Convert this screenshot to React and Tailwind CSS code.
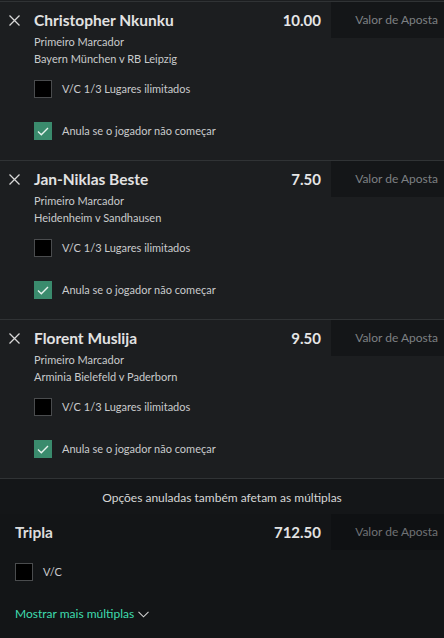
import React from "react";

const font = { fontFamily: 'Lato, "Open Sans", "Liberation Sans", sans-serif' };

function XIcon() {
  return (
    <svg width="11" height="11" viewBox="0 0 11 11" className="text-[#d8d8d8]">
      <path d="M0.5 0.5 L10.5 10.5 M10.5 0.5 L0.5 10.5" stroke="currentColor" strokeWidth="1.3" fill="none" />
    </svg>
  );
}

function Box({ checked }) {
  if (checked) {
    return (
      <div className="w-[18px] h-[18px] bg-[#3a8b6d] flex items-center justify-center">
        <svg width="12" height="9" viewBox="0 0 12 9">
          <path d="M1 4.5 L4.3 7.7 L11 1" stroke="#e8f3ee" strokeWidth="1.4" fill="none" />
        </svg>
      </div>
    );
  }
  return <div className="w-[18px] h-[18px] bg-black border border-[#4a4c4e]" />;
}

function Stake({ dark }) {
  return (
    <div
      className={
        dark
          ? "w-[113px] h-[36px] bg-[#0f1113] flex items-center justify-end pr-[6px] text-[12px] text-[#6f7275]"
          : "w-[113px] h-[36px] bg-[#141618] flex items-center justify-end pr-[6px] text-[12px] text-[#7d8083]"
      }
    >
      Valor de Aposta
    </div>
  );
}

function Selection({ name, odds, match }) {
  return (
    <div className="h-[158px] bg-[#1c1e20] border-t border-[#303335] box-content">
      <div className="flex items-center h-[36px]">
        <div className="w-[34px] flex justify-center pr-[6px]">
          <XIcon />
        </div>
        <div className="flex-1 text-[15.5px] font-bold text-[#e2e2e2] leading-none pt-[1px]">{name}</div>
        <div className="text-[15px] font-bold text-[#e6e6e6] pr-[10px] leading-none pt-[1px]">{odds}</div>
        <Stake />
      </div>
      <div className="pl-[34px] text-[11px] text-[#c9cbcc] leading-[17px] mt-[-5px]">Primeiro Marcador</div>
      <div className="pl-[34px] text-[11px] text-[#c9cbcc] leading-[17px]">{match}</div>
      <div className="pl-[34px] flex items-center gap-[10px] mt-[13px] text-[11px] text-[#c9cbcc]">
        <Box />
        <span>V/C 1/3 Lugares ilimitados</span>
      </div>
      <div className="pl-[34px] flex items-center gap-[10px] mt-[24px] text-[11px] text-[#c9cbcc]">
        <Box checked />
        <span>Anula se o jogador não começar</span>
      </div>
    </div>
  );
}

export default function App() {
  return (
    <div style={font} className="w-[444px] h-[638px] bg-[#131517] overflow-hidden">
      <div className="h-[1px] bg-[#1c1e20]" />
      <Selection name="Christopher Nkunku" odds="10.00" match="Bayern München v RB Leipzig" />
      <Selection name="Jan-Niklas Beste" odds="7.50" match="Heidenheim v Sandhausen" />
      <Selection name="Florent Muslija" odds="9.50" match="Arminia Bielefeld v Paderborn" />
      <div className="border-t border-[#303335] h-[36px] bg-[#141618] flex items-center justify-center pt-[3px] text-[12px] text-[#d6d6d6]">
        Opções anuladas também afetam as múltiplas
      </div>
      <div className="bg-[#131517]">
        <div className="flex items-center h-[36px]">
          <div className="flex-1 pl-[15px] text-[15.5px] font-bold text-[#dcdcdc] leading-none pt-[1px]">Tripla</div>
          <div className="text-[15px] font-bold text-[#e2e2e2] pr-[10px] leading-none pt-[1px]">712.50</div>
          <Stake dark />
        </div>
        <div className="pl-[15px] flex items-center gap-[10px] mt-[13px] text-[11px] text-[#c9cbcc]">
          <Box />
          <span>V/C</span>
        </div>
        <div className="pl-[15px] flex items-center gap-[4px] mt-[24px] text-[12px] text-[#3fdcae]">
          <span>Mostrar mais múltiplas</span>
          <svg width="11" height="7" viewBox="0 0 11 7">
            <path d="M0.5 0.8 L5.5 5.8 L10.5 0.8" stroke="#cfcfcf" strokeWidth="1.1" fill="none" />
          </svg>
        </div>
      </div>
    </div>
  );
}
